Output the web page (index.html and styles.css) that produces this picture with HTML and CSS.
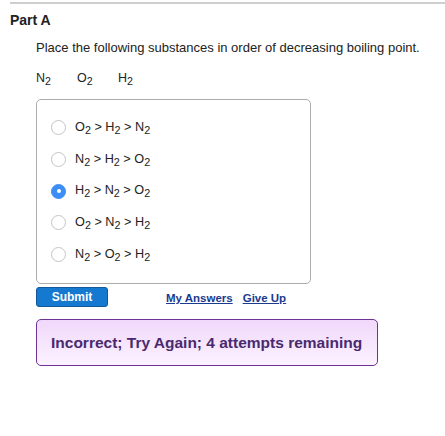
FILE: index.html
```html
<!DOCTYPE html>
<html>
<head>
<meta charset="utf-8">
<link rel="stylesheet" href="styles.css">
</head>
<body>
<div class="page">
  <div class="topline"></div>
  <h2 class="part">Part A</h2>
  <div class="content">
    <p class="prompt">Place the following substances in order of decreasing boiling point.</p>
    <div class="items">
      <span>N<sub>2</sub></span>
      <span>O<sub>2</sub></span>
      <span>H<sub>2</sub></span>
    </div>
    <div class="options">
      <label class="opt"><span class="radio"></span><span>O<sub>2</sub> &gt; H<sub>2</sub> &gt; N<sub>2</sub></span></label>
      <label class="opt"><span class="radio"></span><span>N<sub>2</sub> &gt; H<sub>2</sub> &gt; O<sub>2</sub></span></label>
      <label class="opt"><span class="radio checked"></span><span>H<sub>2</sub> &gt; N<sub>2</sub> &gt; O<sub>2</sub></span></label>
      <label class="opt"><span class="radio"></span><span>O<sub>2</sub> &gt; N<sub>2</sub> &gt; H<sub>2</sub></span></label>
      <label class="opt"><span class="radio"></span><span>N<sub>2</sub> &gt; O<sub>2</sub> &gt; H<sub>2</sub></span></label>
    </div>
    <div class="actions">
      <button class="submit">Submit</button>
      <div class="links">
        <a href="#">My Answers</a>
        <a href="#">Give Up</a>
      </div>
    </div>
    <div class="feedback">Incorrect; Try Again; 4 attempts remaining</div>
  </div>
</div>
</body>
</html>
```
FILE: styles.css
```css
html, body {
  margin: 0;
  padding: 0;
  background: #fff;
}
body {
  font-family: "Liberation Sans", Arial, sans-serif;
  color: #222;
}
.page {
  padding: 2px 0 0 10px;
}
.topline {
  height: 2px;
  background: #cfcfcf;
}
.part {
  margin: 8px 0 0 0;
  font-size: 14px;
  font-weight: bold;
  line-height: 16px;
  color: #222;
}
.content {
  padding-left: 26px;
}
.prompt {
  margin: 12px 0 0 0;
  font-size: 13px;
  line-height: 15px;
  color: #222;
}
.items {
  display: flex;
  margin-top: 16px;
  font-size: 12.5px;
  line-height: 15px;
}
.items span {
  width: 41px;
}
sub {
  font-size: 85%;
  vertical-align: -3px;
  line-height: 0;
}
.options {
  width: 275px;
  margin-top: 13px;
  border: 1px solid #acacac;
  border-radius: 5px;
  padding: 11px 0 13px 0;
  box-sizing: border-box;
  height: 185px;
}
.opt {
  display: flex;
  align-items: center;
  height: 31.7px;
  font-size: 12.7px;
  color: #222;
}
.radio {
  width: 13px;
  height: 13px;
  border: 1px solid #c4c4c4;
  border-radius: 50%;
  margin-left: 14px;
  margin-right: 9px;
  box-sizing: content-box;
  background: #fff;
  position: relative;
  top: 1px;
}
.radio.checked {
  border-color: #3a8ef5;
  background: #3a8ef5;
}
.radio.checked::after {
  content: "";
  position: absolute;
  left: 4.5px;
  top: 4.5px;
  width: 4px;
  height: 4px;
  border-radius: 50%;
  background: #fff;
}
.actions {
  display: flex;
  align-items: center;
  margin-top: 3px;
}
.submit {
  width: 72px;
  height: 20px;
  padding: 0;
  background: #1579cf;
  border: 1px solid #12589a;
  border-radius: 3px;
  color: #fff;
  font-family: "Liberation Sans", Arial, sans-serif;
  font-weight: bold;
  font-size: 12px;
}
.links {
  display: flex;
  gap: 10px;
  margin-left: 58px;
  padding-top: 2px;
}
.links a {
  color: #1a3b8f;
  font-weight: bold;
  font-size: 11.5px;
  text-decoration: underline;
}
.feedback {
  width: 342px;
  height: 47px;
  box-sizing: border-box;
  margin-top: 12px;
  border: 1px solid #6d3494;
  border-radius: 5px;
  background: linear-gradient(#f0d8fb, #fcf2ff);
  color: #4a2a6e;
  font-weight: bold;
  font-size: 15.5px;
  display: flex;
  align-items: center;
  padding-left: 14px;
}
```
